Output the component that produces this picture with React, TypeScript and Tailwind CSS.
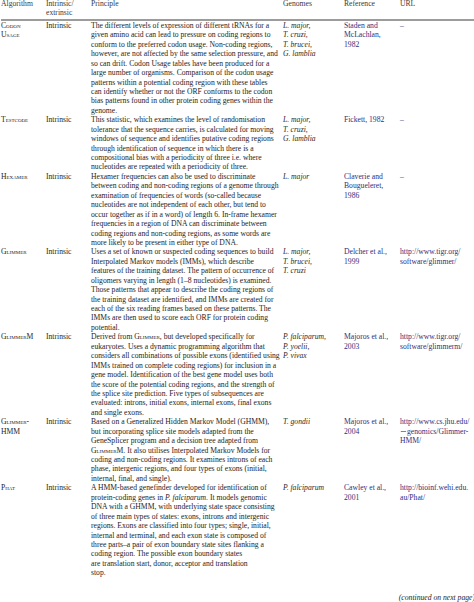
import React from "react";

type Seg = string | { t: string; sc?: boolean; it?: boolean };
type Line = Seg[] | string;

interface Row {
  alg: React.ReactNode;
  kind: string;
  principle: Line[];
  genomes: string[];
  refs: string[];
  urls: string[];
}

const SC = ({ children }: { children: React.ReactNode }) => (
  <span className="[font-variant-caps:small-caps]">{children}</span>
);

const rows: Row[] = [
  {
    alg: (
      <>
        <div><SC>Codon</SC></div>
        <div><SC>Usage</SC></div>
      </>
    ),
    kind: "Intrinsic",
    principle: [
      "The different levels of expression of different tRNAs for a",
      "given amino acid can lead to pressure on coding regions to",
      "conform to the preferred codon usage. Non-coding regions,",
      "however, are not affected by the same selection pressure, and",
      "so can drift. Codon Usage tables have been produced for a",
      "large number of organisms. Comparison of the codon usage",
      "patterns within a potential coding region with these tables",
      "can identify whether or not the ORF conforms to the codon",
      "bias patterns found in other protein coding genes within the",
      "genome.",
    ],
    genomes: ["L. major,", "T. cruzi,", "T. brucei,", "G. lamblia"],
    refs: ["Staden and", "McLachlan,", "1982"],
    urls: ["–"],
  },
  {
    alg: <div><SC>Testcode</SC></div>,
    kind: "Intrinsic",
    principle: [
      "This statistic, which examines the level of randomisation",
      "tolerance that the sequence carries, is calculated for moving",
      "windows of sequence and identifies putative coding regions",
      "through identification of sequence in which there is a",
      "compositional bias with a periodicity of three i.e. where",
      "nucleotides are repeated with a periodicity of three.",
    ],
    genomes: ["L. major,", "T. cruzi,", "G. lamblia"],
    refs: ["Fickett, 1982"],
    urls: ["–"],
  },
  {
    alg: <div><SC>Hexamer</SC></div>,
    kind: "Intrinsic",
    principle: [
      "Hexamer frequencies can also be used to discriminate",
      "between coding and non-coding regions of a genome through",
      "examination of frequencies of words (so-called because",
      "nucleotides are not independent of each other, but tend to",
      "occur together as if in a word) of length 6. In-frame hexamer",
      "frequencies in a region of DNA can discriminate between",
      "coding regions and non-coding regions, as some words are",
      "more likely to be present in either type of DNA.",
    ],
    genomes: ["L. major"],
    refs: ["Claverie and", "Bougueleret,", "1986"],
    urls: ["–"],
  },
  {
    alg: <div><SC>Glimmer</SC></div>,
    kind: "Intrinsic",
    principle: [
      "Uses a set of known or suspected coding sequences to build",
      "Interpolated Markov models (IMMs), which describe",
      "features of the training dataset. The pattern of occurrence of",
      "oligomers varying in length (1–8 nucleotides) is examined.",
      "Those patterns that appear to describe the coding regions of",
      "the training dataset are identified, and IMMs are created for",
      "each of the six reading frames based on these patterns. The",
      "IMMs are then used to score each ORF for protein coding",
      "potential.",
    ],
    genomes: ["L. major,", "T. brucei,", "T. cruzi"],
    refs: ["Delcher et al.,", "1999"],
    urls: ["http://www.tigr.org/", "software/glimmer/"],
  },
  {
    alg: (
      <div>
        <SC>Glimmer</SC>M
      </div>
    ),
    kind: "Intrinsic",
    principle: [
      ["Derived from ", { t: "Glimmer", sc: true }, ", but developed specifically for"],
      "eukaryotes. Uses a dynamic programming algorithm that",
      "considers all combinations of possible exons (identified using",
      "IMMs trained on complete coding regions) for inclusion in a",
      "gene model. Identification of the best gene model uses both",
      "the score of the potential coding regions, and the strength of",
      "the splice site prediction. Five types of subsequences are",
      "evaluated: introns, initial exons, internal exons, final exons",
      "and single exons.",
    ],
    genomes: ["P. falciparum,", "P. yoelii,", "P. vivax"],
    refs: ["Majoros et al.,", "2003"],
    urls: ["http://www.tigr.org/", "software/glimmerm/"],
  },
  {
    alg: (
      <>
        <div><SC>Glimmer-</SC></div>
        <div>HMM</div>
      </>
    ),
    kind: "Intrinsic",
    principle: [
      "Based on a Generalized Hidden Markov Model (GHMM),",
      "but incorporating splice site models adapted from the",
      "GeneSplicer program and a decision tree adapted from",
      [{ t: "Glimmer", sc: true }, "M. It also utilises Interpolated Markov Models for"],
      "coding and non-coding regions. It examines introns of each",
      "phase, intergenic regions, and four types of exons (initial,",
      "internal, final, and single).",
    ],
    genomes: ["T. gondii"],
    refs: ["Majoros et al.,", "2004"],
    urls: ["http://www.cs.jhu.edu/", "\u223Cgenomics/Glimmer-", "HMM/"],
  },
  {
    alg: <div><SC>Phat</SC></div>,
    kind: "Intrinsic",
    principle: [
      "A HMM-based genefinder developed for identification of",
      ["protein-coding genes in ", { t: "P. falciparum", it: true }, ". It models genomic"],
      "DNA with a GHMM, with underlying state space consisting",
      "of three main types of states: exons, introns and intergenic",
      "regions. Exons are classified into four types; single, initial,",
      "internal and terminal, and each exon state is composed of",
      "three parts–a pair of exon boundary state sites flanking a",
      "coding region. The possible exon boundary states",
      "are translation start, donor, acceptor and translation",
      "stop.",
    ],
    genomes: ["P. falciparum"],
    refs: ["Cawley et al.,", "2001"],
    urls: ["http://bioinf.wehi.edu.", "au/Phat/"],
  },
];

function renderLine(l: Line, i: number) {
  if (typeof l === "string") return <div key={i} className="whitespace-nowrap">{l}</div>;
  return (
    <div key={i} className="whitespace-nowrap">
      {l.map((s, j) =>
        typeof s === "string" ? (
          <span key={j}>{s}</span>
        ) : (
          <span
            key={j}
            className={(s.sc ? "[font-variant-caps:small-caps] " : "") + (s.it ? "italic" : "")}
          >
            {s.t}
          </span>
        )
      )}
    </div>
  );
}

const grid = "grid grid-cols-[45px_45px_192px_61px_56px_74px]";

export default function App() {
  return (
    <div
      className="w-[474px] h-[602px] overflow-hidden bg-white pl-[1px] text-[7.65px] leading-[9.43px] text-[#1e1e1e]"
      style={{ fontFamily: '"Liberation Serif", "Times New Roman", serif' }}
    >
      <div className={`${grid} -mt-[1px] pb-[1px] border-b-2 border-[#9c9c9c] text-[#3a3a3a]`}>
        <div>Algorithm</div>
        <div>
          <div>Intrinsic/</div>
          <div>extrinsic</div>
        </div>
        <div>Principle</div>
        <div>Genomes</div>
        <div>Reference</div>
        <div>URL</div>
      </div>
      <div>
        {rows.map((r, i) => (
          <div key={i} className={grid}>
            <div className="whitespace-nowrap">{r.alg}</div>
            <div>{r.kind}</div>
            <div>{r.principle.map(renderLine)}</div>
            <div className="italic text-[#2a2a2a]">
              {r.genomes.map((g, k) => (
                <div key={k} className="whitespace-nowrap">{g}</div>
              ))}
            </div>
            <div className="text-[#2f2f7c]">
              {r.refs.map((g, k) => (
                <div key={k} className="whitespace-nowrap">{g}</div>
              ))}
            </div>
            <div className="text-[#2f2f7c]">
              {r.urls.map((g, k) => (
                <div key={k} className="whitespace-nowrap">{g}</div>
              ))}
            </div>
          </div>
        ))}
      </div>
      <div className="mt-[15px] text-right italic whitespace-nowrap -mr-[1px]">
        (continued on next page)
      </div>
    </div>
  );
}
